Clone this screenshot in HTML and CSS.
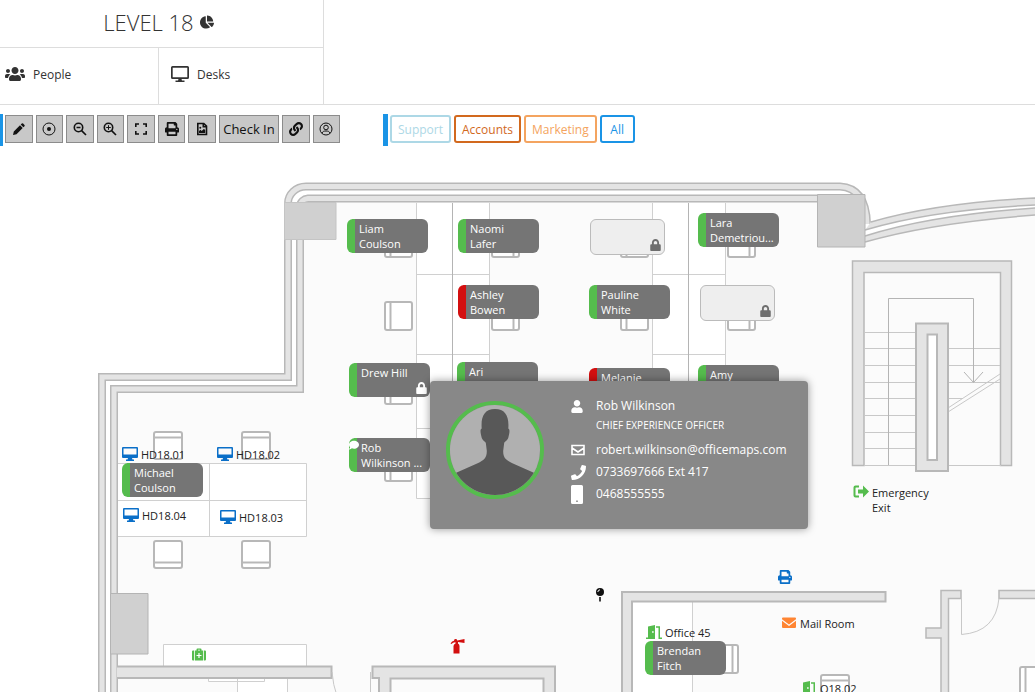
FILE: index.html
```html
<!DOCTYPE html>
<html lang="en">
<head>
  <meta charset="UTF-8">
  <meta name="viewport" content="width=device-width, initial-scale=1">
  <title>Level 18</title>
  <link rel="stylesheet" href="styles.css">
</head>
<body>

  <!-- shared icons -->
  <svg class="sprite" aria-hidden="true">
    <symbol id="i-lock" viewBox="0 0 448 512"><path d="M400 224h-24v-72C376 68.2 307.8 0 224 0S72 68.2 72 152v72H48c-26.5 0-48 21.5-48 48v192c0 26.5 21.5 48 48 48h352c26.5 0 48-21.5 48-48V272c0-26.5-21.5-48-48-48zm-104 0H152v-72c0-39.7 32.3-72 72-72s72 32.3 72 72v72z"/></symbol>
    <symbol id="i-print" viewBox="0 0 512 512"><path d="M448 192V77.25c0-8.49-3.37-16.62-9.37-22.63L393.37 9.37c-6-6-14.14-9.37-22.63-9.37H96C78.33 0 64 14.33 64 32v160c-35.35 0-64 28.65-64 64v112c0 8.84 7.16 16 16 16h48v96c0 17.67 14.33 32 32 32h320c17.67 0 32-14.33 32-32v-96h48c8.84 0 16-7.16 16-16V256c0-35.35-28.65-64-64-64zm-64 256H128v-96h256v96zm0-224H128V64h192v48c0 8.84 7.16 16 16 16h48v96zm48 72c-13.25 0-24-10.75-24-24 0-13.26 10.75-24 24-24s24 10.74 24 24c0 13.25-10.75 24-24 24z"/></symbol>
    <symbol id="i-desk" viewBox="0 0 16 14"><path fill-rule="evenodd" d="M1 0h14a1 1 0 0 1 1 1v9a1 1 0 0 1-1 1h-5l.5 1.500H12V14H4v-1.500h1.500L6 11H1a1 1 0 0 1-1-1V1a1 1 0 0 1 1-1zm.5 1.500V7.500h13V1.500z"/></symbol>
    <symbol id="i-door" viewBox="0 0 16 14"><path fill-rule="evenodd" d="M2 1.500L9 0v14H0v-1.500h2zM6.300 6v2h1.200V6z"/><path d="M10 1.200h4v11.300h2V14h-3.500V2.700H10z"/></symbol>
  </svg>

  <header class="header">
    <div class="level">
      <h1 class="level-title">
        LEVEL 18
        <svg class="icon-pie" viewBox="0 0 544 512"><path d="M527.79 288H290.5l158.03 158.03c6.04 6.04 15.98 6.53 22.19.68 38.7-36.46 65.32-85.61 73.13-140.86 1.34-9.46-6.51-17.85-16.06-17.85zm-15.83-64.8C503.72 103.74 408.26 8.28 288.8.04 279.68-.59 272 7.1 272 16.24V240h223.77c9.14 0 16.82-7.68 16.19-16.8zM224 288V50.71c0-9.55-8.39-17.4-17.84-16.06C86.99 51.49-4.1 155.6.14 280.37 4.5 408.51 114.83 513.59 243.03 511.98c50.4-.63 96.97-16.87 135.26-44.03 7.9-5.6 8.42-17.23 1.57-24.08L224 288z"/></svg>
      </h1>
      <nav class="tabs">
        <a class="tab people" href="#people">
          <svg viewBox="0 0 640 512"><path d="M96 224c35.3 0 64-28.700 64-64s-28.700-64-64-64-64 28.700-64 64 28.700 64 64 64zm448 0c35.3 0 64-28.700 64-64s-28.700-64-64-64-64 28.700-64 64 28.700 64 64 64zm32 32h-64c-17.600 0-33.500 7.100-45.100 18.600 40.300 22.100 68.900 62 75.100 109.400h66c17.700 0 32-14.300 32-32v-32c0-35.300-28.700-64-64-64zm-256 0c61.900 0 112-50.100 112-112S381.900 32 320 32 208 82.100 208 144s50.100 112 112 112zm76.800 32h-8.300c-20.800 10-43.900 16-68.500 16s-47.600-6-68.500-16h-8.300C179.600 288 128 339.600 128 403.200V432c0 26.500 21.500 48 48 48h288c26.500 0 48-21.500 48-48v-28.800c0-63.600-51.600-115.200-115.200-115.200zm-223.700-13.400C161.500 263.100 145.600 256 128 256H64c-35.300 0-64 28.700-64 64v32c0 17.700 14.300 32 32 32h65.900c6.300-47.400 34.900-87.300 75.200-109.400z"/></svg>
          People
        </a>
        <a class="tab desks" href="#desks">
          <svg viewBox="0 0 18 16"><path fill-rule="evenodd" d="M1.500 0h15A1.500 1.500 0 0 1 18 1.500v10a1.500 1.500 0 0 1-1.500 1.500h-6l.5 1.500h2.500V16h-9v-1.500H7L7.500 13h-6A1.500 1.500 0 0 1 0 11.500v-10A1.500 1.500 0 0 1 1.500 0zm.2 1.700v9.600h14.600V1.700z"/></svg>
          Desks
        </a>
      </nav>
    </div>
  </header>

  <div class="toolbar">
    <div class="tools">
      <button class="tool" aria-label="Edit"><svg viewBox="0 0 14 14"><path d="M1 13l.8-3.500L8 3.300l2.700 2.700L4.500 12.200zM8.700 2.600l1.100-1.100a1 1 0 0 1 1.300 0l1.400 1.400a1 1 0 0 1 0 1.300l-1.100 1.100z"/></svg></button>
      <button class="tool" aria-label="Centre"><svg viewBox="0 0 14 14"><circle class="line" cx="7" cy="7" r="6"/><circle cx="7" cy="7" r="2"/></svg></button>
      <button class="tool" aria-label="Zoom out"><svg viewBox="0 0 14 14"><circle class="line bold" cx="5.500" cy="5.500" r="4.200"/><path class="line bold" d="M8.600 8.600L13 13M3.500 5.500h4"/></svg></button>
      <button class="tool" aria-label="Zoom in"><svg viewBox="0 0 14 14"><circle class="line bold" cx="5.500" cy="5.500" r="4.200"/><path class="line bold" d="M8.600 8.600L13 13"/><path class="line" d="M3.200 5.500h4.600M5.500 3.200v4.600"/></svg></button>
      <button class="tool" aria-label="Full screen"><svg viewBox="0 0 14 14"><path class="line bold" d="M1.800 5V2H5M9 2h3.200v3M12.200 9v3H9M5 12H1.800V9"/></svg></button>
      <button class="tool" aria-label="Print"><svg><use href="#i-print"/></svg></button>
      <button class="tool" aria-label="Export image"><svg viewBox="0 0 14 14"><path class="line bold" d="M2.800 1.500h6l2.700 2.700v8.300H2.800zM8.300 1.500v3.200h3.200"/><path d="M4 11V9l1.500-1.200L6.700 9 9 6.800l1.200 1.400V11z"/><circle cx="5.300" cy="5.800" r="1"/></svg></button>
      <button class="tool check-in">Check In</button>
      <button class="tool" aria-label="Copy link"><svg viewBox="0 0 512 512"><path d="M326.612 185.391c59.747 59.809 58.927 155.698.36 214.59-.11.12-.24.25-.36.37l-67.2 67.2c-59.27 59.27-155.699 59.262-214.96 0-59.27-59.26-59.27-155.7 0-214.96l37.106-37.106c9.84-9.84 26.786-3.3 27.294 10.606.648 17.722 3.826 35.527 9.69 52.721 1.986 5.822.567 12.262-3.783 16.612l-13.087 13.087c-28.026 28.026-28.905 73.66-1.155 101.96 28.024 28.579 74.086 28.749 102.325.51l67.2-67.19c28.191-28.191 28.073-73.757 0-101.83-3.701-3.694-7.429-6.564-10.341-8.569a16.037 16.037 0 0 1-6.947-12.606c-.396-10.567 3.348-21.456 11.698-29.806l21.054-21.055c5.521-5.521 14.182-6.199 20.584-1.731a152.482 152.482 0 0 1 20.522 17.197zM467.547 44.449c-59.261-59.262-155.69-59.27-214.96 0l-67.2 67.2c-.12.12-.25.25-.36.37-58.566 58.892-59.387 154.781.36 214.59a152.454 152.454 0 0 0 20.521 17.196c6.402 4.468 15.064 3.789 20.584-1.731l21.054-21.055c8.35-8.35 12.094-19.239 11.698-29.806a16.037 16.037 0 0 0-6.947-12.606c-2.912-2.005-6.64-4.875-10.341-8.569-28.073-28.073-28.191-73.639 0-101.83l67.2-67.19c28.239-28.239 74.3-28.069 102.325.51 27.75 28.3 26.872 73.934-1.155 101.96l-13.087 13.087c-4.35 4.35-5.769 10.79-3.783 16.612 5.864 17.194 9.042 34.999 9.69 52.721.509 13.906 17.454 20.446 27.294 10.606l37.106-37.106c59.271-59.259 59.271-155.699.001-214.959z"/></svg></button>
      <button class="tool" aria-label="My profile"><svg viewBox="0 0 14 14"><circle class="line" cx="7" cy="7" r="6"/><circle class="line" cx="7" cy="5.500" r="2.300"/><path class="line" d="M3 11.300c.6-2 2-2.300 4-2.300s3.400.3 4 2.300"/></svg></button>
    </div>
    <div class="filters">
      <button class="filter support">Support</button>
      <button class="filter accounts">Accounts</button>
      <button class="filter marketing">Marketing</button>
      <button class="filter all">All</button>
    </div>
  </div>

  <main class="map">
    <svg class="plan" viewBox="0 150 1400 800" aria-hidden="true">
      <defs>
        <g id="chair-side"><rect x="1" y="1" width="27" height="28" rx="2"/><path d="M6.500 1v28"/></g>
        <g id="chair-top"><rect x="1" y="1" width="28" height="27" rx="2"/><path d="M1 6.500h28"/></g>
      </defs>

      <!-- inside of the building -->
      <path class="gap" d="M288 204a19 18 0 0 1 19-18H840q26 4 27 36L865 240H303V388H113V950H102V377H288z"/>
      <path class="room" d="M303 202H865V242Q931 223 1035 215L1400 200V950H117V392H303z"/>

      <!-- outer walls -->
      <path class="wall-edge" d="M102 950V377H288V204a18 17 0 0 1 18-17.500H840Q866 188 867 224"/>
      <path class="wall-fill" d="M102 950V377H288V204a18 17 0 0 1 18-17.500H840Q866 188 867 224"/>
      <path class="wall-edge" d="M114 950V389H300V206a9 8 0 0 1 8-7.500H850"/>
      <path class="wall-fill" d="M114 950V389H300V206a9 8 0 0 1 8-7.500H850"/>
      <path class="gap" d="M865 230Q931 210 1035 205L1400 190V194L1035 208Q931 215 865 236z"/>
      <path class="wall" d="M871 222Q935 203 1035 198L1400 183V190L1035 205Q931 210 865 230"/>
      <path class="wall" d="M865 236Q931 215 1035 208L1400 194V200L1035 215Q931 223 865 242"/>
      <path class="pillar soft" d="M284.500 202.500h51.500v37h-51.500z"/>
      <path class="pillar" d="M817.500 194.500h47.500v52.500h-47.500z"/>
      <path class="pillar" d="M110.500 593.500h37.500v60.500h-37.500z"/>

      <!-- chairs -->
      <g class="chair">
        <use href="#chair-side" x="384" y="228"/>
        <use href="#chair-side" x="384" y="301"/>
        <use href="#chair-side" x="384" y="375"/>
        <use href="#chair-side" x="384" y="452"/>
        <use href="#chair-side" x="620" y="228"/>
        <use href="#chair-side" x="620" y="301"/>
        <use href="#chair-side" transform="translate(520 228) scale(-1 1)"/>
        <use href="#chair-side" transform="translate(520 301) scale(-1 1)"/>
        <use href="#chair-side" transform="translate(756 228) scale(-1 1)"/>
        <use href="#chair-side" transform="translate(756 301) scale(-1 1)"/>
        <use href="#chair-side" transform="translate(739 644) scale(-1 1)"/>
        <use href="#chair-side" x="1019" y="666"/>
        <use href="#chair-top" x="153" y="431"/>
        <use href="#chair-top" x="241" y="431"/>
        <use href="#chair-top" x="820" y="674"/>
        <use href="#chair-top" transform="translate(153 569) scale(1 -1)"/>
        <use href="#chair-top" transform="translate(241 569) scale(1 -1)"/>
      </g>

      <!-- desks -->
      <path class="desk" d="M416.500 203V498.500H489.500V203M416.500 274.500h73M416.500 354.500h73M416.500 428.500h73"/>
      <path class="desk" d="M652.500 203V498.500H725.500V203M652.500 274.500h73M652.500 354.500h73"/>
      <path class="split" d="M452.500 203V498M688.500 203V498"/>
      <path class="desk" d="M118 463.500H306.500V536.500H118M118 500.500H306.500M209.500 463V537"/>
      <path class="desk" d="M163.500 666V644.500H306.500V666"/>
      <path class="desk" d="M237.500 678V950H287.500V678M208.500 678v3.500h56v-3.500"/>
      <path class="desk" d="M692.500 602V950H632V602"/>

      <!-- stairs -->
      <path class="wall" d="M852.500 465.500V261H1011.500V465.500H1000.500V272.500H864V465.500z"/>
      <path class="step" d="M864 465.500h137M864 332.500h52M864 348.500h52M864 365.500h52M864 382.500h52M864 398.500h52M864 415.500h52M864 432.500h52M864 448.500h52M948 348.500h52M948 365.500h52M948 382.500h52M948 398.500h15M948 408L1000 374M948 412L1000 379"/>
      <path class="route" d="M888.500 465V298.500H973.500V382M964 372l9.500 10.500L983 372"/>
      <path class="wall thick" d="M916 323.500H948V471H916z"/>
      <path class="slot" d="M927.500 334.500H937V460H927.500z"/>

      <!-- lower rooms -->
      <path class="wall thick" d="M117 666.500H331.500V678H117"/>
      <path class="step" d="M332 672q1 13 5 24M370.500 950V672"/>
      <path class="wall thick" d="M379 950V678H372.500V666.500H555V950H543.500V678.500H390.500V950"/>
      <path class="wall thick" d="M622 950V592H885.500V601.500H632V950"/>
      <path class="wall" d="M941 950V638H926V628H941V590.500H961V598.500H948.500V950"/>
      <path class="wall" d="M1400 590.500H999V598.500H1400"/>
      <path class="step" d="M961.500 598V634.500Q996 632 999 598"/>
    </svg>

    <button class="person liam">Liam Coulson</button>
    <button class="person naomi">Naomi<br>Lafer</button>
    <button class="person lara">Lara<br>Demetriou...</button>
    <button class="person busy ashley">Ashley Bowen</button>
    <button class="person pauline">Pauline White</button>
    <button class="person drew">Drew Hill<svg class="lock"><use href="#i-lock"/></svg></button>
    <button class="person ari">Ari</button>
    <button class="person busy melanie">Melanie</button>
    <button class="person amy">Amy</button>
    <button class="person rob">Rob<br>Wilkinson ...<svg class="note" viewBox="0 0 512 512"><path d="M256 32C114.600 32 0 125.100 0 240c0 49.600 21.400 95 57 130.700C44.500 421.100 2.700 466 2.200 466.500c-2.200 2.300-2.800 5.700-1.500 8.700S4.800 480 8 480c66.300 0 116-31.800 140.600-51.400 32.700 12.300 69 19.400 107.400 19.400 141.400 0 256-93.100 256-208S397.400 32 256 32z"/></svg></button>
    <button class="person michael">Michael Coulson</button>
    <button class="person brendan">Brendan Fitch</button>

    <button class="locked locked-a" aria-label="Locked desk"><svg class="lock"><use href="#i-lock"/></svg></button>
    <button class="locked locked-b" aria-label="Locked desk"><svg class="lock"><use href="#i-lock"/></svg></button>

    <div class="place blue hd1"><svg><use href="#i-desk"/></svg>HD18.01</div>
    <div class="place blue hd2"><svg><use href="#i-desk"/></svg>HD18.02</div>
    <div class="place blue hd3"><svg><use href="#i-desk"/></svg>HD18.03</div>
    <div class="place blue hd4"><svg><use href="#i-desk"/></svg>HD18.04</div>
    <div class="place green exit"><svg viewBox="0 0 16 14"><path d="M6 .5H2.500a2 2 0 0 0-2 2v8a2 2 0 0 0 2 2H6v-2H3a.5.5 0 0 1-.5-.5V3a.5.5 0 0 1 .5-.5h3z"/><path d="M5 4.500h5V.5l6 6-6 6v-4H5z"/></svg><span>Emergency<br>Exit</span></div>
    <div class="place green office"><svg><use href="#i-door"/></svg>Office 45</div>
    <div class="place green o18"><svg><use href="#i-door"/></svg>O18.02</div>
    <div class="place orange mail"><svg viewBox="0 0 16 14"><path d="M1 2.500a1 1 0 0 1 1-1h12a1 1 0 0 1 1 1v.8L8 8.500 1 3.300z"/><path d="M1 4.800l7 5.200 7-5.200V11a1 1 0 0 1-1 1H2a1 1 0 0 1-1-1z"/></svg>Mail Room</div>

    <svg class="marker blue printer"><use href="#i-print"/></svg>
    <svg class="marker green first-aid" viewBox="0 0 14 14"><path fill-rule="evenodd" d="M3 2.500h1.500V1.500a1 1 0 0 1 1-1h3a1 1 0 0 1 1 1v1H11v10H3zM6 1.700v.8h2v-.8zM6.400 5v1.900H4.500v1.200h1.900V10h1.200V8.100h1.900V6.900H7.600V5z"/><path d="M0 3.500a1 1 0 0 1 1-1h1.200v10H1a1 1 0 0 1-1-1zM11.800 2.500H13a1 1 0 0 1 1 1v8a1 1 0 0 1-1 1h-1.200z"/></svg>
    <svg class="marker red extinguisher" viewBox="0 0 16 16"><path d="M3.500 15.500V8a3 3 0 0 1 2-2.500V4.200Q3 4 1.500 6L.5 5.500Q2 3 4 2.800a1.600 1.600 0 0 1 3.200-.3L14.500 1v4L8 4v1.500A3 3 0 0 1 9.500 8v7.500z"/></svg>
    <svg class="marker black pushpin" viewBox="0 0 14 14"><circle cx="7" cy="4" r="4"/><path d="M6.200 9h1.600v4.500H6.200z"/><path class="shine" d="M4.800 4Q5 2 7 1.800"/></svg>

    <!-- contact card -->
    <section class="card">
      <svg class="avatar" viewBox="0 0 88 88">
        <rect width="88" height="88"/>
        <path d="M44 4c-10 0-14 7-13 19-2 1-1 5 0 9 1 3 3 3 4 5l1 8c0 7-3 9-9 12L0 69v19h88V69L61 57c-6-3-9-5-9-12l1-8c1-2 3-2 4-5 1-4 2-8 0-9C58 11 54 4 44 4z"/>
      </svg>
      <ul class="details">
        <li class="name"><svg viewBox="0 0 448 512"><path d="M224 256c70.700 0 128-57.300 128-128S294.700 0 224 0 96 57.300 96 128s57.300 128 128 128zm89.600 32h-16.700c-22.200 10.200-46.900 16-72.900 16s-50.600-5.800-72.900-16h-16.700C60.200 288 0 348.200 0 422.400V464c0 26.500 21.500 48 48 48h352c26.500 0 48-21.500 48-48v-41.600c0-74.200-60.200-134.400-134.400-134.400z"/></svg>Rob Wilkinson</li>
        <li class="role">CHIEF EXPERIENCE OFFICER</li>
        <li class="email"><svg viewBox="0 0 14 14"><path class="line bold" d="M1 2.500h12v9H1zM1 5l6 4 6-4"/></svg><a href="mailto:robert.wilkinson@officemaps.com">robert.wilkinson@officemaps.com</a></li>
        <li class="phone"><svg viewBox="0 0 512 512"><path d="M493.400 24.600l-104-24c-11.300-2.600-22.900 3.300-27.500 13.900l-48 112c-4.200 9.800-1.400 21.300 6.900 28l60.600 49.600c-36 76.700-98.900 140.500-177.200 177.200l-49.600-60.600c-6.800-8.300-18.200-11.100-28-6.900l-112 48C3.900 366.500-2 378.100.6 389.400l24 104C27.100 504.200 36.700 512 48 512c256.100 0 464-207.500 464-464 0-11.200-7.700-20.900-18.600-23.400z"/></svg>0733697666 Ext 417</li>
        <li class="mobile"><svg viewBox="0 0 12 19"><path fill-rule="evenodd" d="M1.500 0h9A1.500 1.500 0 0 1 12 1.500v16a1.500 1.500 0 0 1-1.500 1.500h-9A1.500 1.500 0 0 1 0 17.500v-16A1.500 1.500 0 0 1 1.500 0zM5.200 15.500v1.500h1.600v-1.500z"/></svg>0468555555</li>
      </ul>
    </section>
  </main>

</body>
</html>
```
FILE: styles.css
```css
* { margin: 0; padding: 0; box-sizing: border-box; }
body {
  height: 100vh;
  display: flex;
  flex-direction: column;
  overflow: hidden;
  background: #fff;
  color: #333;
  font-family: 'Open Sans', sans-serif;
  font-size: 12px;
}
button {
  font-family: inherit;
  cursor: pointer;
}
svg { fill: currentColor; flex: none; }
.line { fill: none; stroke: currentColor; stroke-width: 1; }
.line.bold { stroke-width: 1.6; }
.sprite { position: absolute; width: 0; height: 0; }

/* header */
.header {
  border-bottom: 1px solid #ddd;
}
.level {
  width: 324px;
  border-right: 1px solid #ddd;
}
.level-title {
  display: flex;
  justify-content: center;
  align-items: center;
  gap: 6px;
  height: 48px;
  padding-right: 6px;
  padding-bottom: 3px;
  border-bottom: 1px solid #ddd;
  font-size: 22px;
  font-weight: 300;
}
.icon-pie { width: 14px; height: 14px; }
.tabs { display: flex; }
.tab {
  display: flex;
  align-items: center;
  gap: 8px;
  height: 56px;
  padding-bottom: 4px;
  color: #333;
  text-decoration: none;
}
.tab.people {
  width: 159px;
  padding-left: 5px;
  border-right: 1px solid #ddd;
}
.tab.desks { padding-left: 12px; }
.tab svg { width: 20px; height: 16px; }
.tab.desks svg { width: 18px; }

/* toolbar */
.toolbar {
  display: flex;
  align-items: flex-start;
  gap: 43px;
  padding-top: 9px;
  height: 45px;
}
.tools, .filters {
  display: flex;
  align-items: center;
  gap: 3px;
  height: 32px;
  padding-bottom: 2px;
}
.tools {
  width: 340px;
  padding-left: 2px;
  border-left: 3px solid #1a94e6;
}
.tool {
  display: flex;
  flex: 1 1 0;
  justify-content: center;
  align-items: center;
  height: 28px;
  background: #c8c8c8;
  border: 1px solid #8c8c8c;
  color: #111;
  font-size: 13px;
}
.tool svg { width: 14px; height: 14px; }
.tool.check-in { flex: 0 0 60px; }
.filters {
  padding-left: 2px;
  border-left: 5px solid #1a94e6;
}
.filter {
  min-width: 35px;
  height: 28px;
  padding: 0 6px;
  background: #fff;
  border: 2px solid;
  border-radius: 3px;
  font-size: 12px;
}
.filter.support { color: #add8e6; }
.filter.accounts { color: #d2691e; }
.filter.marketing { color: #f4a460; }
.filter.all { color: #1a94e6; }

/* floor plan */
.map {
  position: relative;
  flex: 1;
  overflow: hidden;
  font-size: 11px;
  line-height: 15px;
}
.plan { display: block; width: 1400px; height: 800px; fill: none; }
.gap, .slot { fill: #fff; }
.room { fill: #fbfbfb; }
.wall-edge { stroke: #b8b8b8; stroke-width: 8; }
.wall-fill { stroke: #e4e4e4; stroke-width: 5; }
.wall { fill: #e4e4e4; stroke: #b8b8b8; stroke-width: 1.5; }
.wall.thick, .slot { stroke: #b8b8b8; stroke-width: 2; }
.pillar { fill: #d0d0d0; stroke: #b4b4b4; stroke-width: 1; }
.pillar.soft { stroke: #c4c4c4; }
.chair { fill: #fff; stroke: #b8b8b8; stroke-width: 2; }
.desk { fill: #fff; stroke: #d0d0d0; stroke-width: 1; }
.split, .route { stroke: #b4b4b4; stroke-width: 1; }
.step { stroke: #c8c8c8; stroke-width: 1; }

/* people on the plan */
.person {
  position: absolute;
  display: block;
  width: 81px;
  height: 34px;
  padding: 0 4px;
  background: #757575;
  border: 0;
  border-left: 8px solid #55bc4d;
  border-radius: 6px;
  color: #fff;
  font-size: 11px;
  line-height: 15px;
  text-align: left;
}
.person.busy { border-left-color: #d30f0f; }
.liam { left: 347px; top: 69px; }
.naomi { left: 458px; top: 69px; }
.lara { left: 698px; top: 63px; }
.ashley { left: 458px; top: 135px; }
.pauline { left: 589px; top: 135px; }
.drew { left: 349px; top: 213px; }
.ari { left: 457px; top: 212px; }
.melanie { left: 589px; top: 218px; }
.amy { left: 698px; top: 215px; }
.rob { left: 349px; top: 288px; }
.michael { left: 122px; top: 313px; }
.brendan { left: 645px; top: 491px; }
.drew, .ari, .melanie, .amy { padding-bottom: 15px; }
.lock {
  position: absolute;
  right: 3px;
  bottom: 3px;
  width: 11px;
  height: 12px;
}
.note {
  position: absolute;
  left: -8px;
  top: 2px;
  width: 10px;
  height: 10px;
}
.locked {
  position: absolute;
  width: 75px;
  height: 36px;
  background: #eee;
  border: 1px solid #bbb;
  border-radius: 6px;
  color: #6e6e6e;
}
.locked-a { left: 590px; top: 69px; }
.locked-b { left: 700px; top: 135px; }

/* places and equipment */
.place {
  position: absolute;
  display: flex;
  gap: 3px;
  color: #222;
}
.place svg { width: 16px; height: 14px; }
.blue svg, .marker.blue { color: #0a6fc8; }
.green svg, .marker.green { color: #55bc4d; }
.orange svg { color: #ff8533; }
.marker.red { color: #d30f0f; }
.marker.black { color: #111; }
.hd1 { left: 122px; top: 297px; }
.hd2 { left: 217px; top: 297px; }
.hd3 { left: 220px; top: 360px; }
.hd4 { left: 123px; top: 358px; }
.exit { left: 853px; top: 335px; }
.office { left: 646px; top: 475px; }
.o18 { left: 801px; top: 531px; }
.mail { left: 781px; top: 466px; }
.marker {
  position: absolute;
  width: 14px;
  height: 14px;
}
.printer { left: 778px; top: 420px; }
.first-aid { left: 192px; top: 498px; }
.extinguisher { left: 450px; top: 488px; width: 16px; height: 16px; }
.pushpin { left: 593px; top: 438px; }
.shine { fill: none; stroke: #fff; stroke-width: 1; }

/* contact card */
.card {
  position: absolute;
  left: 430px;
  top: 231px;
  display: flex;
  align-items: flex-start;
  gap: 27px;
  width: 378px;
  height: 148px;
  padding: 14px 16px;
  background: #888;
  border-radius: 4px;
  box-shadow: 0 0 8px rgba(0, 0, 0, 0.4);
  color: #fff;
}
.avatar {
  width: 98px;
  height: 98px;
  margin-top: 6px;
  border: 4px solid #55bc4d;
  border-radius: 50%;
  fill: #585858;
}
.avatar rect { fill: #b0b0b0; }
.details {
  list-style: none;
  font-size: 12px;
  line-height: 22px;
}
.details li {
  display: grid;
  grid-template-columns: 16px 1fr;
  align-items: center;
  gap: 9px;
}
.details svg { width: 12px; height: 13px; }
.details .email svg { width: 14px; height: 14px; }
.details .phone svg { width: 15px; height: 15px; }
.details .mobile svg { height: 19px; }
.details a { color: #fff; text-decoration: none; }
.details .role {
  display: block;
  padding-left: 25px;
  margin-bottom: 6px;
  font-size: 10px;
  line-height: 16px;
}
```
